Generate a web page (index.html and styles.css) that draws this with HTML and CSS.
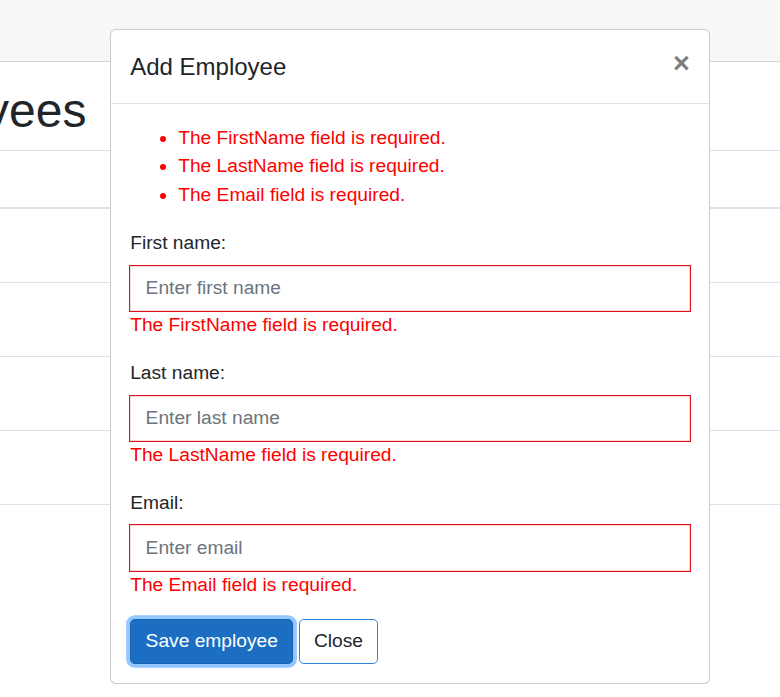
FILE: index.html
```html
<!DOCTYPE html>
<html lang="en">
<head>
<meta charset="utf-8">
<title>Employees</title>
<link rel="stylesheet" href="styles.css">
</head>
<body>
<div class="page">
  <div class="top-row"></div>
  <h1 class="page-title">Employees</h1>
  <div class="table">
    <div class="table-head"></div>
    <div class="table-row"></div>
    <div class="table-row"></div>
    <div class="table-row"></div>
    <div class="table-row"></div>
  </div>
</div>

<div class="modal">
  <div class="modal-header">
    <h5 class="modal-title">Add Employee</h5>
    <button type="button" class="close">&times;</button>
  </div>
  <div class="modal-body">
    <ul class="validation-errors">
      <li class="validation-message">The FirstName field is required.</li>
      <li class="validation-message">The LastName field is required.</li>
      <li class="validation-message">The Email field is required.</li>
    </ul>
    <div class="form-group">
      <label class="form-label">First name:</label>
      <input class="form-control invalid" type="text" placeholder="Enter first name">
      <div class="validation-message">The FirstName field is required.</div>
    </div>
    <div class="form-group">
      <label class="form-label">Last name:</label>
      <input class="form-control invalid" type="text" placeholder="Enter last name">
      <div class="validation-message">The LastName field is required.</div>
    </div>
    <div class="form-group">
      <label class="form-label">Email:</label>
      <input class="form-control invalid" type="text" placeholder="Enter email">
      <div class="validation-message">The Email field is required.</div>
    </div>
    <div class="actions">
      <button type="button" class="btn btn-primary">Save employee</button> <button type="button" class="btn btn-outline">Close</button>
    </div>
  </div>
</div>
</body>
</html>
```

FILE: styles.css
```css
html, body {
  margin: 0;
  padding: 0;
}

body {
  width: 780px;
  height: 697px;
  overflow: hidden;
  position: relative;
  background: #fff;
  font-family: "Liberation Sans", Arial, sans-serif;
  font-size: 19.2px;
  line-height: 1.5;
  color: #212529;
}

.top-row {
  height: 61px;
  background: #f7f7f7;
  border-bottom: 1px solid #d6d5d5;
}

.page-title {
  margin: 19.6px 0 10.8px -151px;
  font-size: 48px;
  font-weight: 500;
  line-height: 1.2;
  white-space: nowrap;
}

.table-head {
  height: 56px;
  border-top: 1px solid #dee2e6;
  border-bottom: 2px solid #dee2e6;
}

.table-row {
  height: 73px;
  border-bottom: 1px solid #dee2e6;
}

.modal {
  position: absolute;
  top: 29px;
  left: 110px;
  width: 600px;
  box-sizing: border-box;
  background: #fff;
  border: 1px solid rgba(0, 0, 0, 0.2);
  border-radius: 5.76px;
}

.modal-header {
  display: flex;
  align-items: flex-start;
  padding: 19.2px 19.2px 18.2px;
  border-bottom: 1px solid #dee2e6;
}

.modal-title {
  margin: 0;
  font-size: 24px;
  font-weight: 500;
  line-height: 1.5;
}

.close {
  margin: -19.2px -19.2px -19.2px auto;
  padding: 19.2px;
  background: transparent;
  border: 0;
  font-family: "Liberation Sans", Arial, sans-serif;
  font-size: 28.8px;
  font-weight: 700;
  line-height: 1;
  color: #000;
  text-shadow: 0 1px 0 #fff;
  opacity: 0.5;
}

.modal-body {
  padding: 19.2px;
}

.validation-errors {
  margin: 0 0 19.2px;
  padding-left: 48px;
}

.validation-message {
  color: red;
}

.form-group {
  margin-bottom: 19.2px;
}

.form-label {
  display: inline-block;
  margin-bottom: 7.6px;
}

.form-control {
  display: block;
  width: 100%;
  height: 45.6px;
  box-sizing: border-box;
  padding: 7.2px 14.4px;
  font-family: "Liberation Sans", Arial, sans-serif;
  font-size: 19.2px;
  line-height: 1.5;
  color: #495057;
  background: #fff;
  border: 1px solid #f3d6d9;
  border-radius: 0;
}

.form-control::placeholder {
  color: #6c757d;
  opacity: 1;
}

.form-control.invalid {
  outline: 1px solid #e0101e;
}

.actions {
  font-size: 19.2px;
}

.btn {
  display: inline-block;
  vertical-align: middle;
  padding: 7.2px 14.4px;
  font-family: "Liberation Sans", Arial, sans-serif;
  font-size: 19.2px;
  line-height: 1.5;
  border: 1px solid transparent;
  border-radius: 4.8px;
}

.btn-primary {
  color: #fff;
  background: #1b6ec2;
  border-color: #1861ac;
  box-shadow: 0 0 0 3.84px rgba(38, 143, 255, 0.5);
}

.btn-outline {
  color: #212529;
  background: #fff;
  border-color: #2a84e0;
}
```
